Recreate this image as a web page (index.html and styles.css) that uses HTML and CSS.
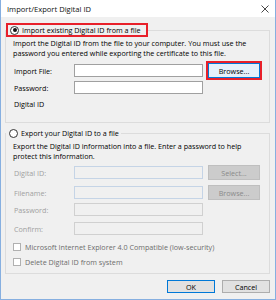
FILE: index.html
```html
<!DOCTYPE html>
<html>
<head>
<meta charset="utf-8">
<link rel="stylesheet" href="styles.css">
</head>
<body>
<div class="window">
  <div class="titlebar">
    <span class="title">Import/Export Digital ID</span>
    <svg class="close" width="8" height="8" viewBox="0 0 8 8"><path d="M0.5 0.5L7.5 7.5M7.5 0.5L0.5 7.5" stroke="#333" stroke-width="0.9" fill="none"/></svg>
  </div>
  <div class="body">
    <fieldset class="group g1">
      <legend class="legend hl"><span class="radio on"></span><span>Import existing Digital ID from a file</span></legend>
      <p class="desc">Import the Digital ID from the file to your computer. You must use the<br>password you entered while exporting the certificate to this file.</p>
      <div class="row r-file">
        <span class="lbl">Import File:</span>
        <span class="input"></span>
        <span class="btn focus red">Browse...</span>
      </div>
      <div class="row r-pass">
        <span class="lbl">Password:</span>
        <span class="input"></span>
      </div>
      <div class="lbl did">Digital ID</div>
    </fieldset>
    <fieldset class="group g2">
      <legend class="legend"><span class="radio"></span><span>Export your Digital ID to a file</span></legend>
      <p class="desc">Export the Digital ID information into a file. Enter a password to help<br>protect this information.</p>
      <div class="row d1">
        <span class="lbl dis">Digital ID:</span>
        <span class="input dis blue"></span>
        <span class="btn dis">Select...</span>
      </div>
      <div class="row d2">
        <span class="lbl dis">Filename:</span>
        <span class="input dis blue"></span>
        <span class="btn dis">Browse...</span>
      </div>
      <div class="row d3">
        <span class="lbl dis">Password:</span>
        <span class="input dis"></span>
      </div>
      <div class="row d4">
        <span class="lbl dis">Confirm:</span>
        <span class="input dis"></span>
      </div>
      <div class="check c1"><span class="box"></span><span>Microsoft Internet Explorer 4.0 Compatible (low-security)</span></div>
      <div class="check c2"><span class="box"></span><span>Delete Digital ID from system</span></div>
    </fieldset>
    <div class="footer">
      <span class="btn default">OK</span>
      <span class="btn">Cancel</span>
    </div>
  </div>
</div>
</body>
</html>
```

FILE: styles.css
```css
* { box-sizing: border-box; margin: 0; padding: 0; }
html, body { margin: 0; background: #fff; }
body {
  font-family: "Open Sans", "Noto Sans", sans-serif;
  font-size: 7.2px;
  color: #000;
}
.window {
  width: 276px;
  height: 300px;
  border: 1px solid #86afe0;
  border-top: 0;
  background: #f0f0f0;
  display: flex;
  flex-direction: column;
}
.titlebar {
  height: 17px;
  background: #fff;
  display: flex;
  align-items: center;
  justify-content: space-between;
  padding: 0 6px 0 6px;
}
.title { font-size: 7.6px; color: #111; }
.close { display: block; }
.body {
  flex: 1;
  padding: 0 4px 0 4px;
  display: flex;
  flex-direction: column;
}
.group {
  border: 1px solid #dcdcdc;
  padding: 0 7px 0 8px;
  width: 265px;
}
.g1 { margin-top: 6px; padding-bottom: 13px; }
.g2 { margin-top: 3px; padding-bottom: 6px; }
.legend {
  display: flex;
  align-items: center;
  gap: 3px;
  height: 14px;
  margin-left: -8px;
  padding: 0 2px 0 3px;
  line-height: 10px;
}
.legend.hl { border: 2px solid #e8202a; padding-left: 2px; padding-right: 5px; }
.radio {
  width: 9px;
  height: 9px;
  border: 1px solid #333;
  border-radius: 50%;
  background: #fff;
  position: relative;
  flex: none;
}
.radio.on::after {
  content: "";
  position: absolute;
  left: 1.5px; top: 1.5px;
  width: 4px; height: 4px;
  border-radius: 50%;
  background: #111;
}
.desc { line-height: 10px; margin-top: 1px; margin-left: -1px; }
.row {
  display: grid;
  grid-template-columns: 55px 129px 52px;
  column-gap: 5px;
  align-items: center;
}
.lbl { line-height: 10px; }
.input {
  height: 13px;
  background: #fff;
  border: 1px solid #a0a0a0;
}
.input.dis { background: #f0f0f0; border-color: #d0d0d0; }
.input.dis.blue { border-color: #c5d4e6; }
.btn {
  display: flex;
  align-items: center;
  justify-content: center;
  height: 15px;
  background: #e1e1e1;
  border: 1px solid #adadad;
  line-height: 10px;
}
.btn.focus { background: #e5f1fb; border-color: #0078d7; }
.btn.red { outline: 2px solid #e8202a; outline-offset: 0; }
.btn.dis { background: #cccccc; border-color: #bfbfbf; color: #8a8a8a; }
.btn.default { border-color: #0078d7; }
.r-file { margin-top: 5px; }
.r-pass { margin-top: 3px; }
.did { margin-top: 5px; }
.dis { color: #a0a0a0; }
.d1 { margin-top: 4px; }
.d2 { margin-top: 5px; }
.d3 { margin-top: 3px; }
.d4 { margin-top: 6px; }
.check {
  display: flex;
  align-items: center;
  gap: 4px;
  color: #6d6d6d;
  line-height: 10px;
  margin-left: -1px;
}
.c1 { margin-top: 7px; }
.c2 { margin-top: 5px; }
.box {
  width: 8px; height: 8px;
  border: 1px solid #b0b0b0;
  background: #fff;
  flex: none;
}
.footer {
  display: flex;
  justify-content: flex-end;
  gap: 7px;
  margin-top: 6px;
  padding-right: 1px;
}
.footer .btn { width: 48px; height: 13px; }
```
